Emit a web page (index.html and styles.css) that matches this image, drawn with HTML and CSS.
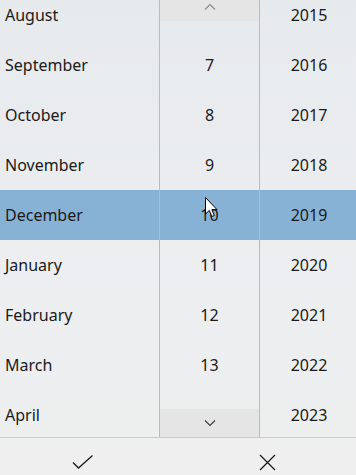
FILE: index.html
```html
<!DOCTYPE html>
<html>
<head>
<meta charset="utf-8">
<link rel="stylesheet" href="styles.css">
</head>
<body>
<div class="picker">
  <div class="columns">
    <div class="col col-month">
      <div class="list">
        <div class="item">August</div>
        <div class="item">September</div>
        <div class="item">October</div>
        <div class="item">November</div>
        <div class="item">December</div>
        <div class="item">January</div>
        <div class="item">February</div>
        <div class="item">March</div>
        <div class="item">April</div>
      </div>
    </div>
    <div class="col col-day">
      <div class="list">
        <div class="item">6</div>
        <div class="item">7</div>
        <div class="item">8</div>
        <div class="item">9</div>
        <div class="item">10</div>
        <div class="item">11</div>
        <div class="item">12</div>
        <div class="item">13</div>
        <div class="item">14</div>
      </div>
      <div class="scroll-btn up">
        <svg width="12" height="8" viewBox="0 0 12 8"><path d="M1 6.5 L6 1.5 L11 6.5" fill="none" stroke="#8a8a8a" stroke-width="1.1"/></svg>
      </div>
      <div class="scroll-btn down">
        <svg width="12" height="8" viewBox="0 0 12 8"><path d="M1 1.5 L6 6.5 L11 1.5" fill="none" stroke="#3a3a3a" stroke-width="1.1"/></svg>
      </div>
    </div>
    <div class="col col-year">
      <div class="list">
        <div class="item">2015</div>
        <div class="item">2016</div>
        <div class="item">2017</div>
        <div class="item">2018</div>
        <div class="item">2019</div>
        <div class="item">2020</div>
        <div class="item">2021</div>
        <div class="item">2022</div>
        <div class="item">2023</div>
      </div>
    </div>
    <div class="selection"></div>
  </div>
  <div class="actions">
    <div class="action accept">
      <svg width="22" height="16" viewBox="0 0 22 16"><path d="M1 8.5 L6.5 14 L20.5 1.5" fill="none" stroke="#1a1a1a" stroke-width="1.3"/></svg>
    </div>
    <div class="action">
      <svg width="17" height="17" viewBox="0 0 17 17"><path d="M1 1 L16 16 M16 1 L1 16" fill="none" stroke="#1a1a1a" stroke-width="1.3"/></svg>
    </div>
  </div>
  <svg class="cursor" width="14" height="22" viewBox="0 0 14 22">
    <path d="M0.5 0.5 L0.5 17 L4.3 13.4 L6.8 19.5 L9.3 18.5 L6.9 12.6 L12 12.6 Z" fill="#ffffff" stroke="#000000" stroke-width="1" stroke-linejoin="round"/>
  </svg>
</div>
</body>
</html>
```
FILE: styles.css
```css
html, body {
  margin: 0;
  padding: 0;
}
body {
  width: 356px;
  height: 475px;
  overflow: hidden;
  font-family: "Noto Sans", "Open Sans", sans-serif;
  color: #1a1a1a;
  background: #eceef0;
}
.picker {
  position: relative;
  width: 356px;
  height: 475px;
  display: flex;
  flex-direction: column;
  background: linear-gradient(180deg, #e7eaed 0%, #eceef0 60%, #eeeeee 100%);
}
.columns {
  position: relative;
  display: flex;
  height: 437px;
  border-bottom: 1px solid #c9c9c9;
  overflow: hidden;
}
.col {
  position: relative;
  z-index: 1;
}
.col-month {
  width: 159px;
  border-right: 1px solid #b9bcbf;
}
.col-day {
  width: 99px;
  border-right: 1px solid #b9bcbf;
  text-align: center;
}
.col-year {
  flex: 1;
  text-align: center;
}
.list {
  margin-top: -10px;
}
.item {
  height: 50px;
  line-height: 50px;
  font-size: 16px;
  white-space: nowrap;
}
.col-month .item {
  padding-left: 5px;
}
.col-year .item {
  padding-left: 2px;
}
.selection {
  position: absolute;
  left: 0;
  right: 0;
  top: 190px;
  height: 50px;
  background: #88b2d5;
  z-index: 0;
}
.scroll-btn {
  position: absolute;
  left: 0;
  right: 0;
  background: #e5e5e5;
  display: flex;
  justify-content: center;
  z-index: 2;
}
.scroll-btn.up {
  top: 0;
  height: 21px;
  align-items: flex-start;
  padding-top: 3px;
  box-sizing: border-box;
}
.scroll-btn.down {
  top: 409px;
  height: 28px;
  align-items: center;
  box-sizing: border-box;
}
.actions {
  flex: 1;
  display: flex;
  background: #efefef;
}
.action {
  flex: 1;
  display: flex;
  align-items: center;
  justify-content: center;
  padding-top: 11px;
}
.action.accept svg {
  margin-right: 12px;
}
.cursor {
  position: absolute;
  left: 205px;
  top: 197px;
  z-index: 5;
}
```
